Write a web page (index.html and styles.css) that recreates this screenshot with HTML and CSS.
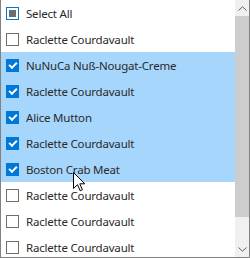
FILE: index.html
```html
<!DOCTYPE html>
<html lang="en">
<head>
  <meta charset="UTF-8" />
  <title>Product Filter</title>
  <link rel="stylesheet" href="styles.css">
</head>
<body>
  <div class="listbox">
    <ul class="items">
      <li class="item"><span class="check partial"></span><span class="label">Select All</span></li>
      <li class="item"><span class="check"></span><span class="label">Raclette Courdavault</span></li>
      <li class="item selected"><span class="check on"></span><span class="label">NuNuCa Nuß-Nougat-Creme</span></li>
      <li class="item selected"><span class="check on"></span><span class="label">Raclette Courdavault</span></li>
      <li class="item selected"><span class="check on"></span><span class="label">Alice Mutton</span></li>
      <li class="item selected"><span class="check on"></span><span class="label">Raclette Courdavault</span></li>
      <li class="item selected"><span class="check on"></span><span class="label">Boston Crab Meat</span></li>
      <li class="item"><span class="check"></span><span class="label">Raclette Courdavault</span></li>
      <li class="item"><span class="check"></span><span class="label">Raclette Courdavault</span></li>
      <li class="item"><span class="check"></span><span class="label">Raclette Courdavault</span></li>
    </ul>

    <div class="scrollbar">
      <div class="arrow">
        <svg width="9" height="5" viewBox="0 0 9 5"><path d="M0.5 4.5 L4.5 0.8 L8.5 4.5" fill="none" stroke="#606060" stroke-width="1"/></svg>
      </div>
      <div class="thumb"></div>
      <div class="track"></div>
      <div class="arrow">
        <svg width="9" height="5" viewBox="0 0 9 5"><path d="M0.5 0.5 L4.5 4.2 L8.5 0.5" fill="none" stroke="#606060" stroke-width="1"/></svg>
      </div>
    </div>

    <svg class="cursor" width="13" height="20" viewBox="0 0 13 20">
      <path d="M0.5 0.5 L0.5 16.5 L4.5 12.7 L7.2 18.8 L9.4 17.8 L6.8 11.8 L11.8 11.8 Z" fill="#fff" stroke="#000" stroke-width="1" stroke-linejoin="miter"/>
    </svg>
  </div>
</body>
</html>
```

FILE: styles.css
```css
body {
  margin: 0;
  background: #fff;
  font-family: 'Noto Sans', 'Segoe UI', sans-serif;
}

.listbox {
  position: relative;
  display: flex;
  width: 250px;
  height: 258px;
  box-sizing: border-box;
  border: 1px solid #828282;
  border-top: none;
  overflow: hidden;
}

.items {
  flex: 1;
  margin: 0;
  padding: 0;
  list-style: none;
}

.item {
  display: flex;
  align-items: center;
  height: 26px;
  padding-left: 5px;
  font-size: 11.5px;
  letter-spacing: -0.2px;
  color: #2a2a2a;
  white-space: nowrap;
}

.item.selected {
  background: #a6d6fc;
}

.check {
  display: flex;
  align-items: center;
  justify-content: center;
  width: 13px;
  height: 13px;
  box-sizing: border-box;
  border: 1px solid #6e6e6e;
  background: #fff;
  margin-right: 7px;
  flex: none;
}

.check.partial {
  border-color: #0078d7;
}

.check.partial::after {
  content: "";
  width: 7px;
  height: 7px;
  background: #6d6d6d;
}

.check.on {
  border-color: #0078d7;
  background: #0078d7;
}

.check.on::after {
  content: "";
  width: 6px;
  height: 3px;
  margin-top: -2px;
  border-left: 2px solid #fff;
  border-bottom: 2px solid #fff;
  transform: rotate(-45deg);
}

.scrollbar {
  display: flex;
  flex-direction: column;
  width: 14px;
  background: #f0f0f0;
}

.arrow {
  display: flex;
  align-items: center;
  justify-content: center;
  height: 16px;
}

.thumb {
  height: 201px;
  background: #cdcdcd;
}

.track {
  flex: 1;
}

.cursor {
  position: absolute;
  left: 72px;
  top: 172px;
}
```
